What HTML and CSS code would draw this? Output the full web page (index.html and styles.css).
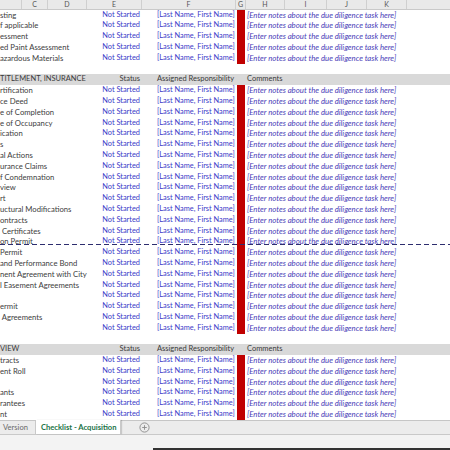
FILE: index.html
```html
<!DOCTYPE html>
<html>
<head>
<meta charset="utf-8">
<link rel="stylesheet" href="styles.css">
</head>
<body>
<div class="sheet">
  <div class="colhdr">
    <div class="ch"></div>
    <div class="ch">C</div>
    <div class="ch">D</div>
    <div class="ch">E</div>
    <div class="ch">F</div>
    <div class="ch">G</div>
    <div class="ch">H</div>
    <div class="ch">I</div>
    <div class="ch">J</div>
    <div class="ch">K</div>
    <div class="ch last"></div>
  </div>
  <div class="rows">
    <div class="row"><div class="lbl">sting</div><div class="st">Not Started</div><div class="nm">[Last Name, First Name]</div><div class="g"></div><div class="cm">[Enter notes about the due diligence task here]</div></div>
    <div class="row"><div class="lbl">f applicable</div><div class="st">Not Started</div><div class="nm">[Last Name, First Name]</div><div class="g"></div><div class="cm">[Enter notes about the due diligence task here]</div></div>
    <div class="row"><div class="lbl">essment</div><div class="st">Not Started</div><div class="nm">[Last Name, First Name]</div><div class="g"></div><div class="cm">[Enter notes about the due diligence task here]</div></div>
    <div class="row"><div class="lbl">ed Paint Assessment</div><div class="st">Not Started</div><div class="nm">[Last Name, First Name]</div><div class="g"></div><div class="cm">[Enter notes about the due diligence task here]</div></div>
    <div class="row"><div class="lbl">azardous Materials</div><div class="st">Not Started</div><div class="nm">[Last Name, First Name]</div><div class="g"></div><div class="cm">[Enter notes about the due diligence task here]</div></div>
    <div class="row blank"></div>
    <div class="row sec"><div class="lbl">TITLEMENT, INSURANCE</div><div class="st">Status</div><div class="nm">Assigned Responsibility</div><div class="gs"></div><div class="cm">Comments</div></div>
    <div class="row"><div class="lbl">rtification</div><div class="st">Not Started</div><div class="nm">[Last Name, First Name]</div><div class="g"></div><div class="cm">[Enter notes about the due diligence task here]</div></div>
    <div class="row"><div class="lbl">ce Deed</div><div class="st">Not Started</div><div class="nm">[Last Name, First Name]</div><div class="g"></div><div class="cm">[Enter notes about the due diligence task here]</div></div>
    <div class="row"><div class="lbl">e of Completion</div><div class="st">Not Started</div><div class="nm">[Last Name, First Name]</div><div class="g"></div><div class="cm">[Enter notes about the due diligence task here]</div></div>
    <div class="row"><div class="lbl">e of Occupancy</div><div class="st">Not Started</div><div class="nm">[Last Name, First Name]</div><div class="g"></div><div class="cm">[Enter notes about the due diligence task here]</div></div>
    <div class="row"><div class="lbl">ication</div><div class="st">Not Started</div><div class="nm">[Last Name, First Name]</div><div class="g"></div><div class="cm">[Enter notes about the due diligence task here]</div></div>
    <div class="row"><div class="lbl">s</div><div class="st">Not Started</div><div class="nm">[Last Name, First Name]</div><div class="g"></div><div class="cm">[Enter notes about the due diligence task here]</div></div>
    <div class="row"><div class="lbl">al Actions</div><div class="st">Not Started</div><div class="nm">[Last Name, First Name]</div><div class="g"></div><div class="cm">[Enter notes about the due diligence task here]</div></div>
    <div class="row"><div class="lbl">urance Claims</div><div class="st">Not Started</div><div class="nm">[Last Name, First Name]</div><div class="g"></div><div class="cm">[Enter notes about the due diligence task here]</div></div>
    <div class="row"><div class="lbl">f Condemnation</div><div class="st">Not Started</div><div class="nm">[Last Name, First Name]</div><div class="g"></div><div class="cm">[Enter notes about the due diligence task here]</div></div>
    <div class="row"><div class="lbl">view</div><div class="st">Not Started</div><div class="nm">[Last Name, First Name]</div><div class="g"></div><div class="cm">[Enter notes about the due diligence task here]</div></div>
    <div class="row"><div class="lbl">rt</div><div class="st">Not Started</div><div class="nm">[Last Name, First Name]</div><div class="g"></div><div class="cm">[Enter notes about the due diligence task here]</div></div>
    <div class="row"><div class="lbl">uctural Modifications</div><div class="st">Not Started</div><div class="nm">[Last Name, First Name]</div><div class="g"></div><div class="cm">[Enter notes about the due diligence task here]</div></div>
    <div class="row"><div class="lbl">ontracts</div><div class="st">Not Started</div><div class="nm">[Last Name, First Name]</div><div class="g"></div><div class="cm">[Enter notes about the due diligence task here]</div></div>
    <div class="row"><div class="lbl">&nbsp;Certificates</div><div class="st">Not Started</div><div class="nm">[Last Name, First Name]</div><div class="g"></div><div class="cm">[Enter notes about the due diligence task here]</div></div>
    <div class="row pb"><div class="lbl">on Permit</div><div class="st">Not Started</div><div class="nm">[Last Name, First Name]</div><div class="g"></div><div class="cm">[Enter notes about the due diligence task here]</div></div>
    <div class="row"><div class="lbl">Permit</div><div class="st">Not Started</div><div class="nm">[Last Name, First Name]</div><div class="g"></div><div class="cm">[Enter notes about the due diligence task here]</div></div>
    <div class="row"><div class="lbl">and Performance Bond</div><div class="st">Not Started</div><div class="nm">[Last Name, First Name]</div><div class="g"></div><div class="cm">[Enter notes about the due diligence task here]</div></div>
    <div class="row"><div class="lbl">nent Agreement with City</div><div class="st">Not Started</div><div class="nm">[Last Name, First Name]</div><div class="g"></div><div class="cm">[Enter notes about the due diligence task here]</div></div>
    <div class="row"><div class="lbl">l Easement Agreements</div><div class="st">Not Started</div><div class="nm">[Last Name, First Name]</div><div class="g"></div><div class="cm">[Enter notes about the due diligence task here]</div></div>
    <div class="row"><div class="lbl"></div><div class="st">Not Started</div><div class="nm">[Last Name, First Name]</div><div class="g"></div><div class="cm">[Enter notes about the due diligence task here]</div></div>
    <div class="row"><div class="lbl">ermit</div><div class="st">Not Started</div><div class="nm">[Last Name, First Name]</div><div class="g"></div><div class="cm">[Enter notes about the due diligence task here]</div></div>
    <div class="row"><div class="lbl">&nbsp;Agreements</div><div class="st">Not Started</div><div class="nm">[Last Name, First Name]</div><div class="g"></div><div class="cm">[Enter notes about the due diligence task here]</div></div>
    <div class="row"><div class="lbl"></div><div class="st">Not Started</div><div class="nm">[Last Name, First Name]</div><div class="g"></div><div class="cm">[Enter notes about the due diligence task here]</div></div>
    <div class="row blank"></div>
    <div class="row sec"><div class="lbl">VIEW</div><div class="st">Status</div><div class="nm">Assigned Responsibility</div><div class="gs"></div><div class="cm">Comments</div></div>
    <div class="row"><div class="lbl">tracts</div><div class="st">Not Started</div><div class="nm">[Last Name, First Name]</div><div class="g"></div><div class="cm">[Enter notes about the due diligence task here]</div></div>
    <div class="row"><div class="lbl">ent Roll</div><div class="st">Not Started</div><div class="nm">[Last Name, First Name]</div><div class="g"></div><div class="cm">[Enter notes about the due diligence task here]</div></div>
    <div class="row"><div class="lbl"></div><div class="st">Not Started</div><div class="nm">[Last Name, First Name]</div><div class="g"></div><div class="cm">[Enter notes about the due diligence task here]</div></div>
    <div class="row"><div class="lbl">ants</div><div class="st">Not Started</div><div class="nm">[Last Name, First Name]</div><div class="g"></div><div class="cm">[Enter notes about the due diligence task here]</div></div>
    <div class="row"><div class="lbl">rantees</div><div class="st">Not Started</div><div class="nm">[Last Name, First Name]</div><div class="g"></div><div class="cm">[Enter notes about the due diligence task here]</div></div>
    <div class="row"><div class="lbl">nt</div><div class="st">Not Started</div><div class="nm">[Last Name, First Name]</div><div class="g"></div><div class="cm">[Enter notes about the due diligence task here]</div></div>
  </div>
  <div class="tabs">
    <div class="tab">Version</div>
    <div class="tab active">Checklist - Acquisition</div>
    <div class="add"><svg width="11" height="11" viewBox="0 0 11 11"><circle cx="5.5" cy="5.5" r="4.6" fill="none" stroke="#8a8a8a" stroke-width="0.9"/><path d="M5.5 3.2V7.8M3.2 5.5H7.8" stroke="#8a8a8a" stroke-width="0.9"/></svg></div>
  </div>
  <div class="status"><div class="dark"></div></div>
</div>
</body>
</html>
```
FILE: styles.css
```css
html, body {
  margin: 0;
  padding: 0;
  background: #ffffff;
}
body {
  width: 450px;
  height: 450px;
  overflow: hidden;
  font-family: Lato, "Open Sans", sans-serif;
}
.sheet {
  width: 450px;
  height: 450px;
  display: flex;
  flex-direction: column;
  overflow: hidden;
}
.colhdr {
  height: 9.6px;
  flex: none;
  display: grid;
  grid-template-columns: 22px 26px 39px 55px 94px 10px 39px 42px 40px 40px 1fr;
  background: #e9e9e9;
  border-bottom: 1px solid #c9c9c9;
  box-sizing: border-box;
}
.ch {
  border-right: 1px solid #cfcfcf;
  font-size: 7px;
  color: #555;
  text-align: center;
  line-height: 8.6px;
}
.ch.last { border-right: none; }
.rows {
  flex: none;
  display: flex;
  flex-direction: column;
}
.row {
  height: 10.8px;
  display: grid;
  grid-template-columns: 87px 55px 94px 10px 1fr;
  font-size: 7.4px;
  line-height: 10.8px;
  white-space: nowrap;
  position: relative;
}
.lbl {
  color: #404040;
  font-size: 7.7px;
}
.st {
  color: #3a3ac8;
  text-align: right;
  padding-right: 2px;
}
.nm {
  color: #3a3ac8;
  padding-left: 15px;
}
.g {
  background: #c00000;
  margin: 0 1px;
}
.cm {
  color: #4a40b8;
  font-style: italic;
  font-size: 7.8px;
  padding-left: 1px;
}
.sec {
  background: #d9d9d9;
}
.sec .lbl, .sec .st, .sec .nm, .sec .cm {
  color: #3a3a3a;
  font-style: normal;
  font-size: 7.5px;
}
.pb::after {
  content: "";
  position: absolute;
  left: 0;
  right: 0;
  top: 8px;
  height: 1px;
  background: repeating-linear-gradient(90deg, #2d2d6e 0 5px, transparent 5px 8px);
}
.tabs {
  height: 15px;
  flex: none;
  display: flex;
  align-items: stretch;
  background: #ececec;
  border-top: 1px solid #c6c6c6;
  border-bottom: 1px solid #c9c9c9;
  box-sizing: border-box;
  font-size: 7.6px;
  white-space: nowrap;
}
.tab {
  display: flex;
  align-items: center;
  color: #6a6a6a;
  padding: 0 3px;
  border-right: 1px solid #c9c9c9;
  width: 36px;
  box-sizing: border-box;
}
.tab.active {
  width: 85px;
  background: #ffffff;
  color: #217346;
  font-weight: bold;
  padding-left: 5px;
  margin-top: -1px;
  box-shadow: 1px 0 1px rgba(0,0,0,0.15);
}
.add {
  display: flex;
  align-items: center;
  padding-left: 18px;
}
.add svg { display: block; }
.status {
  flex: 1;
  background: #f3f3f3;
  position: relative;
}
.dark {
  position: absolute;
  left: 153px;
  right: 0;
  bottom: 0;
  height: 2px;
  background: #333;
}
```
